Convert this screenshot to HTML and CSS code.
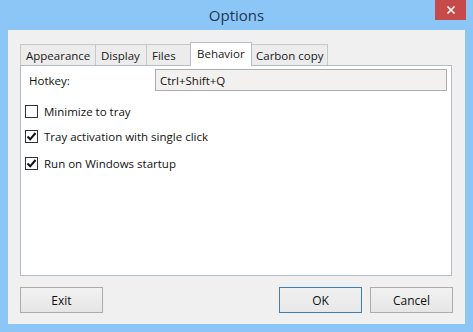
FILE: index.html
```html
<!DOCTYPE html>
<html lang="en">
<head>
    <meta charset="UTF-8">
    <title>Options</title>
    <link rel="stylesheet" href="styles.css">
</head>
<body>
    <div class="window">
        <div class="titlebar">
            <span class="title">Options</span>
            <button class="close-button" aria-label="Close">
                <svg width="10" height="10" viewBox="0 0 10 10">
                    <path d="M1.5 1.5 L8.5 8.5 M8.5 1.5 L1.5 8.5" stroke="#fff" stroke-width="1.6" fill="none"/>
                </svg>
            </button>
        </div>

        <div class="client">
            <div class="tabs">
                <div class="tab tab-appearance">Appearance</div>
                <div class="tab tab-display">Display</div>
                <div class="tab tab-files">Files</div>
                <div class="tab tab-behavior active">Behavior</div>
                <div class="tab tab-carbon">Carbon copy</div>
            </div>

            <div class="panel">
                <div class="hotkey-row">
                    <span class="hotkey-label">Hotkey:</span>
                    <div class="hotkey-field">Ctrl+Shift+Q</div>
                </div>

                <label class="check-row row-minimize">
                    <span class="checkbox"></span>
                    <span>Minimize to tray</span>
                </label>
                <label class="check-row row-tray">
                    <span class="checkbox checked">
                        <svg width="11" height="11" viewBox="0 0 11 11">
                            <path d="M1.5 5.5 L4.2 8.3 L9.5 2" stroke="#111" stroke-width="2" fill="none"/>
                        </svg>
                    </span>
                    <span>Tray activation with single click</span>
                </label>
                <label class="check-row row-startup">
                    <span class="checkbox checked">
                        <svg width="11" height="11" viewBox="0 0 11 11">
                            <path d="M1.5 5.5 L4.2 8.3 L9.5 2" stroke="#111" stroke-width="2" fill="none"/>
                        </svg>
                    </span>
                    <span>Run on Windows startup</span>
                </label>
            </div>

            <div class="buttons">
                <button class="win-button">Exit</button>
                <div class="spacer"></div>
                <button class="win-button default">OK</button>
                <button class="win-button">Cancel</button>
            </div>
        </div>
    </div>
</body>
</html>
```

FILE: styles.css
```css
* {
    margin: 0;
    padding: 0;
    box-sizing: border-box;
}

body {
    font-family: 'Open Sans', 'Noto Sans', sans-serif;
    font-size: 11.5px;
    color: #111;
    background: #8cc6f7;
}

.window {
    width: 473px;
    height: 332px;
    background: #8cc6f7;
    display: flex;
    flex-direction: column;
}

.titlebar {
    position: relative;
    height: 30px;
    display: flex;
    align-items: center;
    justify-content: center;
}

.title {
    font-size: 15px;
    color: #1d3550;
}

.close-button {
    position: absolute;
    top: 0;
    right: 7px;
    width: 31px;
    height: 20px;
    background: #c74a4a;
    border: none;
    display: flex;
    align-items: center;
    justify-content: center;
}

.client {
    margin: 0 8px 8px 8px;
    height: 294px;
    background: #f0f0f0;
    padding: 12px 13px 0 12px;
    display: flex;
    flex-direction: column;
}

/* tabs */

.tabs {
    display: flex;
    align-items: flex-end;
    height: 23px;
    position: relative;
    z-index: 1;
}

.tab {
    height: 21px;
    padding: 0 0 0 5px;
    background: #ececec;
    border: 1px solid #c9c9c9;
    border-bottom: none;
    margin-right: -1px;
    display: flex;
    align-items: center;
    color: #1a1a1a;
    white-space: nowrap;
}

.tab-appearance { width: 76px; }
.tab-display { width: 52px; }
.tab-files { width: 46px; }
.tab-carbon { width: 77px; padding-left: 4px; }

.tab.active {
    width: 62px;
    height: 24px;
    background: #fff;
    border-color: #b4bcc6;
    margin: 0 -1px 0 -1px;
    padding-left: 6px;
    padding-bottom: 3px;
    position: relative;
    top: 1px;
}

.panel {
    height: 211px;
    background: #fff;
    border: 1px solid #b4bcc6;
    padding: 3px 4px 0 7px;
}

.hotkey-row {
    display: flex;
    align-items: center;
    justify-content: space-between;
}

.hotkey-label {
    margin-left: 1px;
}

.hotkey-field {
    width: 292px;
    height: 22px;
    background: #f3f1ef;
    border: 1px solid #abadb3;
    padding: 0 4px;
    display: flex;
    align-items: center;
}

.check-row {
    display: flex;
    align-items: center;
    gap: 6px;
    margin-left: -3px;
    height: 14px;
}

.row-minimize { margin-top: 13px; }
.row-tray { margin-top: 11px; }
.row-startup { margin-top: 13px; }

.checkbox {
    width: 13px;
    height: 13px;
    border: 1px solid #333;
    background: #fff;
    display: flex;
    align-items: center;
    justify-content: center;
}

/* buttons */

.buttons {
    display: flex;
    margin-top: 11px;
    margin-right: -1px;
    gap: 8px;
}

.spacer {
    flex: 1;
}

.win-button {
    width: 83px;
    height: 26px;
    font-family: inherit;
    font-size: 12px;
    color: #111;
    background: linear-gradient(#f2f2f2, #e6e6e6);
    border: 1px solid #acacac;
}

.win-button.default {
    border-color: #3c7fb1;
    background: linear-gradient(#f0f0f0, #e8e8e8);
}
```
